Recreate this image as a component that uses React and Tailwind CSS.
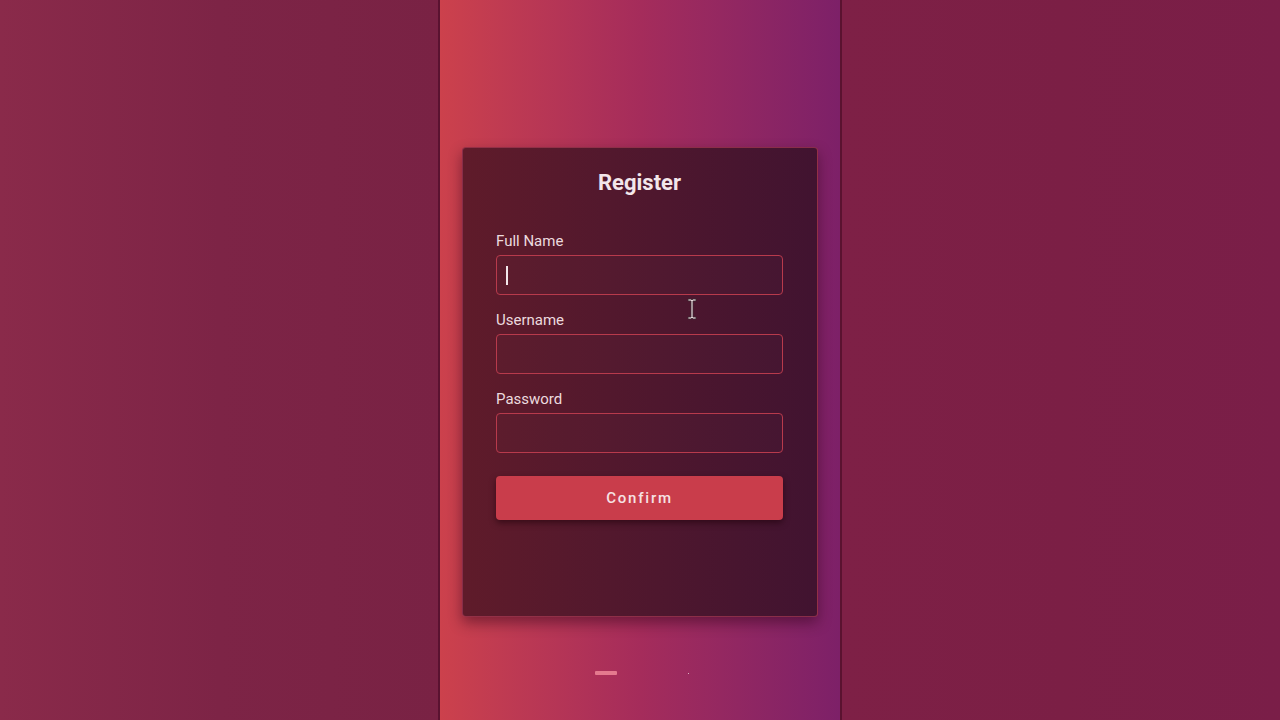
import React from "react";

const Field = ({ label, focused }) => {
  return (
    <div className="flex flex-col">
      <label className="text-[15px] leading-[20px] text-[#ecdadf]">{label}</label>
      <div className="relative mt-[4px] h-[40px] w-full rounded-[4px] border border-[#b83a4c] bg-[#ffffff03]">
        {focused && <span className="absolute left-[9px] top-[10px] h-[19px] w-[1.5px] bg-[#f3e6ea]" />}
      </div>
    </div>
  );
};

const App = () => {
  return (
    <div className="flex h-[720px] w-[1280px] overflow-hidden font-['Roboto',sans-serif]">
      <div className="h-full w-[438px] bg-gradient-to-r from-[#8a2a4a] via-[#7d2446] to-[#792244]" />
      <div className="h-full w-[2px] bg-[#5a1230]" />
      <div className="relative flex h-full w-[400px] flex-col items-center bg-gradient-to-r from-[#cc414c] via-[#a52c5b] to-[#7d2068] pt-[147px]">
        <div className="relative flex h-[470px] w-[356px] flex-col rounded-[4px] border border-[#b8405a99] bg-gradient-to-r from-[#5f1b2a] to-[#411330] pl-[33px] pr-[34px] pt-[20px] shadow-[0_6px_14px_rgba(40,0,20,0.45)]">
          <h1 className="text-center text-[22px] font-bold leading-[30px] text-[#f3e6ea]">Register</h1>
          <div className="mt-[33px] flex flex-col gap-[15px]">
            <Field label="Full Name" focused />
            <Field label="Username" />
            <Field label="Password" />
          </div>
          <button className="mt-[23px] h-[44px] w-full rounded-[4px] bg-[#c93d4b] text-[15px] font-medium tracking-[1.8px] text-[#f6e2e4] shadow-[0_3px_6px_rgba(30,0,10,0.55)]">
            Confirm
          </button>
          <svg className="absolute left-[224px] top-[150px]" width="10" height="22" viewBox="0 0 10 22">
            <path d="M1 1h3l1 1 1-1h3v2H6v16h3v2H6l-1-1-1 1H1v-2h3V3H1z" fill="#e8d8dc" stroke="#3a2a30" strokeWidth="0.8" />
          </svg>
        </div>
        <div className="mt-[54px] flex w-full items-center px-[155px]">
          <span className="h-[4px] w-[22px] shrink-0 rounded-[1px] bg-[#e47a8e]" />
          <span className="ml-[71px] h-[1px] w-[1px] shrink-0 bg-[#d8b0c0]" />
        </div>
      </div>
      <div className="h-full w-[2px] bg-[#5a1230]" />
      <div className="h-full flex-1 bg-gradient-to-r from-[#7e2046] via-[#7b1f45] to-[#7a1e48]" />
    </div>
  );
};

export default App;
